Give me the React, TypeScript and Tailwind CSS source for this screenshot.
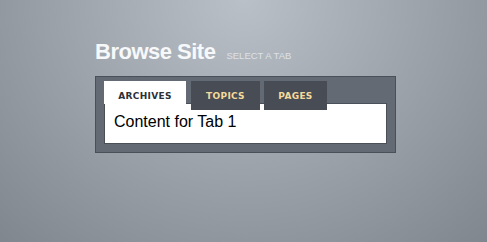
import { useState } from "react";

const tabs = [
  { label: "Archives", width: "w-[82px]", gap: "" },
  { label: "Topics", width: "w-[69px]", gap: "ml-[5px]" },
  { label: "Pages", width: "w-[63px]", gap: "ml-[4px]" },
];

export default function App() {
  const [active, setActive] = useState(0);

  return (
    <div className="h-[242px] w-full overflow-hidden bg-[radial-gradient(ellipse_75%_140%_at_50%_0%,#bac0c8,#7f858d)] font-['Liberation_Sans',Arial,sans-serif]">
      <div className="ml-[95px] pt-[41px]">
        <div className="flex items-baseline">
          <h1 className="text-[22px] leading-none font-bold tracking-[-0.5px] text-[#f6f8fa]">Browse Site</h1>
          <span className="ml-[11px] text-[9.5px] leading-none uppercase text-[#dde1e6]">Select a tab</span>
        </div>

        <div className="mt-[13px] w-[301px] border border-[#4b5058] bg-[#646a73] px-[8px] pt-[4px] pb-[8px]">
          <div className="relative z-10 flex h-[22px] items-start">
            {tabs.map((t, i) => (
              <button
                key={t.label}
                onClick={() => setActive(i)}
                className={`${t.width} ${t.gap} ${
                  i === active
                    ? "h-[23px] bg-white text-[#2b3039]"
                    : "h-[29px] bg-[#474c55] text-[#f4da9b]"
                } flex items-start justify-center pt-[11px] text-[9px] leading-none font-bold uppercase tracking-[0.3px] font-['DejaVu_Sans',Verdana,sans-serif]`}
              >
                {t.label}
              </button>
            ))}
          </div>
          <div className="h-[41px] border border-[#4b5058] bg-white pl-[9px] pt-[10px] text-[16px] leading-none text-black">
            Content for Tab {active + 1}
          </div>
        </div>
      </div>
    </div>
  );
}
